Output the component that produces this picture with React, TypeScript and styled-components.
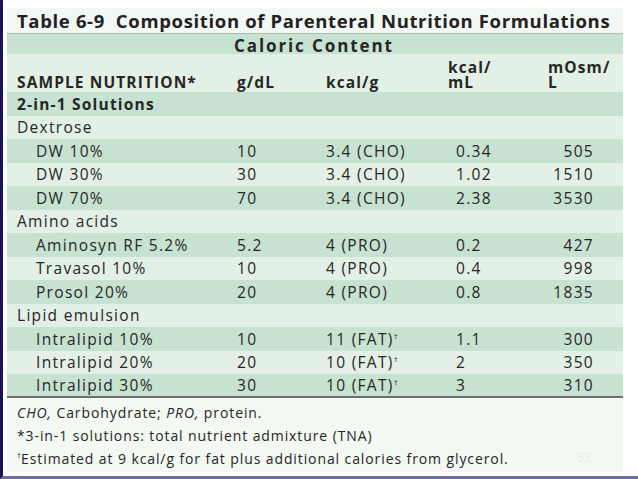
import React, { Fragment, FunctionComponent } from "react";
import styled, { createGlobalStyle } from "styled-components";

interface DataRow {
  name: string;
  gdl: string;
  kcalg: string;
  fat?: boolean;
  kcalml: string;
  mosm: string;
}

interface Section {
  title: string;
  rows: DataRow[];
}

const sections: Section[] = [
  {
    title: "Dextrose",
    rows: [
      { name: "DW 10%", gdl: "10", kcalg: "3.4 (CHO)", kcalml: "0.34", mosm: "505" },
      { name: "DW 30%", gdl: "30", kcalg: "3.4 (CHO)", kcalml: "1.02", mosm: "1510" },
      { name: "DW 70%", gdl: "70", kcalg: "3.4 (CHO)", kcalml: "2.38", mosm: "3530" }
    ]
  },
  {
    title: "Amino acids",
    rows: [
      { name: "Aminosyn RF 5.2%", gdl: "5.2", kcalg: "4 (PRO)", kcalml: "0.2", mosm: "427" },
      { name: "Travasol 10%", gdl: "10", kcalg: "4 (PRO)", kcalml: "0.4", mosm: "998" },
      { name: "Prosol 20%", gdl: "20", kcalg: "4 (PRO)", kcalml: "0.8", mosm: "1835" }
    ]
  },
  {
    title: "Lipid emulsion",
    rows: [
      { name: "Intralipid 10%", gdl: "10", kcalg: "11 (FAT)", fat: true, kcalml: "1.1", mosm: "300" },
      { name: "Intralipid 20%", gdl: "20", kcalg: "10 (FAT)", fat: true, kcalml: "2", mosm: "350" },
      { name: "Intralipid 30%", gdl: "30", kcalg: "10 (FAT)", fat: true, kcalml: "3", mosm: "310" }
    ]
  }
];

const App: FunctionComponent = () => {
  return (
    <Fragment>
      <GlobalStyle />
      <Frame>
        <Panel>
          <Title>Table 6-9&nbsp; Composition of Parenteral Nutrition Formulations</Title>
          <CaloricRow>
            <span />
            <CaloricText>Caloric Content</CaloricText>
          </CaloricRow>
          <HeaderRow>
            <HeadCell>SAMPLE NUTRITION*</HeadCell>
            <HeadCell>g/dL</HeadCell>
            <HeadCell>kcal/g</HeadCell>
            <HeadCell>
              kcal/
              <br />
              mL
            </HeadCell>
            <HeadCell>
              mOsm/
              <br />
              L
            </HeadCell>
          </HeaderRow>
          <Row shade="dark">
            <GroupCell>2-in-1 Solutions</GroupCell>
          </Row>
          {sections.map(section => (
            <Fragment key={section.title}>
              <Row shade="light">
                <Cell>{section.title}</Cell>
              </Row>
              {section.rows.map((row, index) => (
                <Row
                  key={row.name}
                  shade={index % 2 === 0 ? "dark" : "light"}
                  last={row.name === "Intralipid 30%"}
                >
                  <Cell indent>{row.name}</Cell>
                  <Cell>{row.gdl}</Cell>
                  <Cell>
                    {row.kcalg}
                    {row.fat && <Sup>†</Sup>}
                  </Cell>
                  <Cell pad>{row.kcalml}</Cell>
                  <NumCell>{row.mosm}</NumCell>
                </Row>
              ))}
            </Fragment>
          ))}
          <Notes>
            <Note>
              <em>CHO,</em> Carbohydrate; <em>PRO,</em> protein.
            </Note>
            <Note>*3-in-1 solutions: total nutrient admixture (TNA)</Note>
            <Note>
              <Sup>†</Sup>Estimated at 9 kcal/g for fat plus additional calories from glycerol.
            </Note>
            <SlideNo>53</SlideNo>
          </Notes>
        </Panel>
      </Frame>
    </Fragment>
  );
};

export default App;

const GlobalStyle = createGlobalStyle`
  html, body {
    margin: 0;
    padding: 0;
    background: #ffffff;
  }
  body {
    font-family: "Open Sans", "DejaVu Sans", sans-serif;
    color: #262626;
  }
`;

const Frame = styled.div`
  box-sizing: border-box;
  width: 638px;
  height: 479px;
  border-left: 3px solid #15145c;
  border-bottom: 3px solid #6f6d9c;
  padding: 8px 15px 4px 4px;
  display: flex;
`;

const Panel = styled.div`
  flex: 1;
  display: flex;
  flex-direction: column;
  background: #f3f8f3;
`;

const Title = styled.div`
  height: 25px;
  line-height: 25px;
  padding-left: 10px;
  font-size: 18.5px;
  font-weight: 700;
  color: #222;
  white-space: nowrap;
  letter-spacing: 0.65px;
  border-bottom: 1px solid #a7bfae;
  background: #f4f8f4;
`;

const grid = `
  display: grid;
  grid-template-columns: 220px 89px 122px 100px 45px;
  padding-left: 10px;
  align-items: center;
`;

const CaloricRow = styled.div`
  ${grid};
  height: 20px;
  background: #c8e2d1;
`;

const CaloricText = styled.span`
  grid-column: 2 / span 4;
  margin-left: -3px;
  font-size: 17px;
  font-weight: 700;
  letter-spacing: 1.9px;
  white-space: nowrap;
`;

const HeaderRow = styled.div`
  ${grid};
  height: 38px;
  align-items: end;
  padding-bottom: 2px;
  box-sizing: border-box;
  background: #e3f0e5;
`;

const HeadCell = styled.span`
  font-size: 15.5px;
  font-weight: 700;
  line-height: 15px;
  letter-spacing: 1.1px;
  white-space: nowrap;
`;

const Row = styled.div<{ shade: "dark" | "light"; last?: boolean }>`
  ${grid};
  height: 23.5px;
  box-sizing: border-box;
  background: ${props => (props.shade === "dark" ? "#c8e2d1" : "#e3f0e5")};
  border-bottom: ${props => (props.last ? "2px solid #6d706d" : "none")};
`;

const Cell = styled.span<{ indent?: boolean; pad?: boolean }>`
  font-size: 15.5px;
  letter-spacing: 1.3px;
  white-space: nowrap;
  padding-left: ${props => (props.indent ? "19px" : props.pad ? "8px" : "0")};
`;

const NumCell = styled(Cell)`
  text-align: right;
  margin-right: -1px;
`;

const GroupCell = styled(Cell)`
  font-size: 15.5px;
  font-weight: 700;
  letter-spacing: 1.2px;
`;

const Sup = styled.sup`
  font-size: 8px;
  letter-spacing: 0;
  vertical-align: 6px;
  line-height: 0;
`;

const Notes = styled.div`
  position: relative;
  flex: 1;
  padding: 3px 0 0 10px;
  display: flex;
  flex-direction: column;
`;

const Note = styled.div`
  height: 23px;
  line-height: 23px;
  font-size: 14px;
  letter-spacing: 0.9px;
  white-space: nowrap;
`;

const SlideNo = styled.span`
  position: absolute;
  right: 32px;
  bottom: 6px;
  font-size: 13px;
  color: #e6ece6;
`;
